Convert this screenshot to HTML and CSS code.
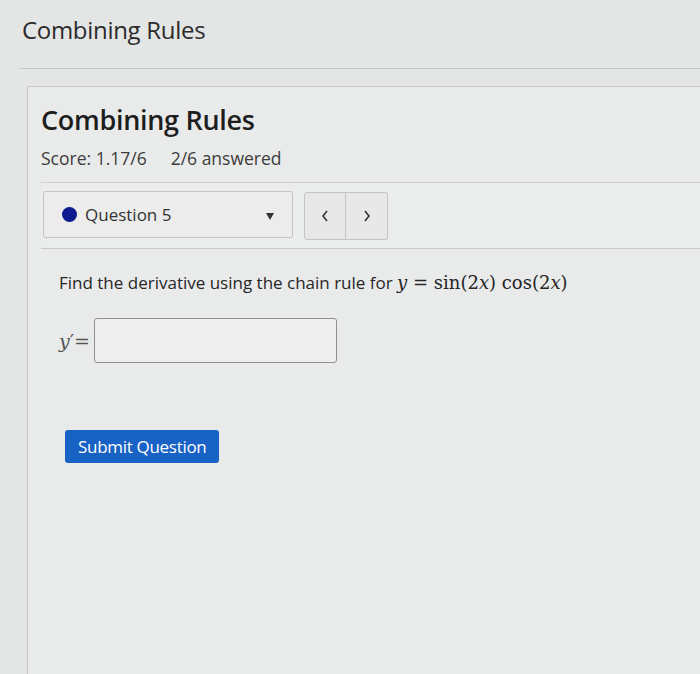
FILE: index.html
```html
<!DOCTYPE html>
<html>
<head>
<meta charset="utf-8">
<link rel="stylesheet" href="styles.css">
</head>
<body>
<header class="top">
  <h1 class="site-title">Combining Rules</h1>
</header>
<main class="panel">
  <h2 class="assess-title">Combining Rules</h2>
  <div class="score">
    <span>Score: 1.17/6</span>
    <span class="answered">2/6 answered</span>
  </div>
  <div class="qbar">
    <div class="qselect">
      <span class="dot"></span>
      <span class="qlabel">Question 5</span>
      <span class="caret"></span>
    </div>
    <div class="nav">
      <button class="navbtn" aria-label="previous">
        <svg width="10" height="14" viewBox="0 0 10 14"><path d="M7 2 L3 7 L7 12" fill="none" stroke="#333" stroke-width="1.6"/></svg>
      </button>
      <button class="navbtn" aria-label="next">
        <svg width="10" height="14" viewBox="0 0 10 14"><path d="M3 2 L7 7 L3 12" fill="none" stroke="#333" stroke-width="1.6"/></svg>
      </button>
    </div>
  </div>
  <section class="question">
    <p class="qtext">Find the derivative using the chain rule for <span class="math"><i>y</i> = sin(2<i>x</i>) cos(2<i>x</i>)</span></p>
    <div class="answer">
      <span class="math lhs"><i>y</i>′=</span>
      <input class="ansbox" type="text">
    </div>
    <button class="submit">Submit Question</button>
  </section>
</main>
</body>
</html>
```

FILE: styles.css
```css
html, body {
  margin: 0;
  padding: 0;
  background: #e4e5e5;
  font-family: "Open Sans", "Noto Sans", sans-serif;
  color: #2a2a2a;
}
.top {
  padding: 14px 0 0 2px;
  height: 54px;
  border-bottom: 1px solid #c6c7c7;
  margin-left: 20px;
}
.site-title {
  margin: 0;
  font-weight: 400;
  font-size: 24px;
  line-height: 32px;
  color: #2b2b2b;
  letter-spacing: -0.3px;
}
.panel {
  margin: 17px 0 0 27px;
  border-top: 1px solid #cbcbcb;
  border-left: 1px solid #c4c4c4;
  background: #e9eaea;
  min-height: 600px;
  padding: 15px 0 0 13px;
}
.assess-title {
  margin: 0;
  font-size: 27px;
  font-weight: 600;
  line-height: 36px;
  color: #1e1e1e;
  letter-spacing: -0.3px;
}
.score {
  margin-top: 8px;
  font-size: 17.5px;
  line-height: 24px;
  color: #3d3d3d;
  display: flex;
  gap: 24px;
}
.qbar {
  margin-top: 12px;
  border-top: 1px solid #d0d0d0;
  border-bottom: 1px solid #c8c8c8;
  padding: 6px 0 8px 2px;
  display: flex;
  align-items: center;
  gap: 11px;
  background: #ebecec;
}
.qselect {
  width: 250px;
  height: 47px;
  box-sizing: border-box;
  border: 1px solid #c2c2c2;
  border-radius: 3px;
  background: #ececec;
  display: flex;
  align-items: center;
  padding: 0 18px 0 18px;
}
.dot {
  width: 15px;
  height: 15px;
  border-radius: 50%;
  background: #0b1a8e;
  margin-right: 8px;
}
.qlabel {
  font-size: 17px;
  color: #333;
  flex: 1;
}
.caret {
  width: 0;
  height: 0;
  border-left: 4.5px solid transparent;
  border-right: 4.5px solid transparent;
  border-top: 7px solid #333;
  margin-top: 4px;
}
.nav {
  display: flex;
  margin-top: 3px;
}
.navbtn {
  width: 42px;
  height: 48px;
  border: 1px solid #c4c4c4;
  background: #e8e8e8;
  display: flex;
  align-items: center;
  justify-content: center;
  padding: 0;
}
.navbtn:first-child {
  border-radius: 3px 0 0 3px;
}
.navbtn + .navbtn {
  border-left: none;
  border-radius: 0 3px 3px 0;
}
.question {
  padding: 19px 0 0 18px;
}
.qtext {
  margin: 0;
  font-size: 17px;
  line-height: 30px;
  color: #262626;
}
.math {
  font-family: "DejaVu Serif", "Liberation Serif", serif;
  font-size: 18px;
}
.math i {
  font-style: italic;
}
.answer {
  display: flex;
  align-items: center;
  margin-top: 20px;
  gap: 4px;
}
.lhs {
  color: #555;
  font-size: 19px;
}
.ansbox {
  width: 243px;
  height: 45px;
  box-sizing: border-box;
  border: 1px solid #8f8f8f;
  border-radius: 3px;
  background: #eeeeee;
  margin: 0;
}
.submit {
  margin-top: 67px;
  margin-left: 6px;
  background: #1762c4;
  color: #ffffff;
  border: none;
  border-radius: 3px;
  font-family: "Open Sans", "Noto Sans", sans-serif;
  font-size: 17px;
  padding: 0 13px;
  height: 33px;
  letter-spacing: -0.3px;
}
```
